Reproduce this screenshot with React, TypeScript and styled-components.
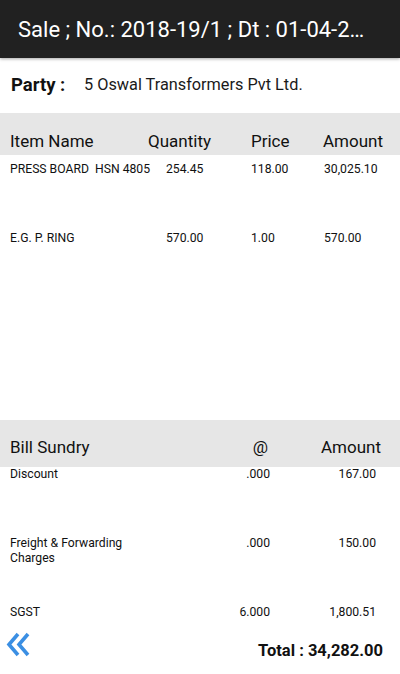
import styled, {createGlobalStyle} from "styled-components";

const GlobalStyle = createGlobalStyle`
  html, body {
    margin: 0;
    padding: 0;
    background: #fff;
    font-family: Roboto, "Noto Sans", Arial, sans-serif;
    color: #111;
  }
`

const Screen = styled.div`
  width: 400px;
  height: 674px;
  display: flex;
  flex-direction: column;
  overflow: hidden;
`

const TitleBar = styled.div`
  height: 58px;
  flex: none;
  background: #212121;
  color: #fff;
  display: flex;
  align-items: center;
  padding: 0 30px 0 18px;
  font-size: 22px;
  box-shadow: 0 1px 3px rgba(0, 0, 0, 0.35);
  position: relative;
  z-index: 1;

  span {
    white-space: nowrap;
    overflow: hidden;
    text-overflow: ellipsis;
  }
`

const PartyRow = styled.div`
  height: 55px;
  flex: none;
  display: flex;
  align-items: center;
  padding: 0 11px;
  box-sizing: border-box;
  padding-bottom: 2px;
`

const PartyLabel = styled.div`
  font-weight: bold;
  font-size: 18.5px;
  width: 73px;
`

const PartyName = styled.div`
  font-size: 16.3px;
  color: #1a1a1a;
`

const HeadBar = styled.div<{ $h: number, $pb: number, $cols: string }>`
  height: ${p => p.$h}px;
  flex: none;
  background: #e6e6e6;
  display: grid;
  grid-template-columns: ${p => p.$cols};
  align-items: end;
  padding-left: 10px;
  padding-bottom: ${p => p.$pb}px;
  box-sizing: border-box;
  font-size: 17px;
  color: #111;
`

const ItemList = styled.div`
  height: 265px;
  flex: none;
`

const Row = styled.div<{ $cols: string, $top?: number }>`
  height: 69px;
  box-sizing: border-box;
  display: grid;
  grid-template-columns: ${p => p.$cols};
  align-items: start;
  padding-left: 10px;
  padding-top: ${p => p.$top || 0}px;
  font-size: 12.2px;
  line-height: 15px;
  color: #111;
`

const Cell = styled.div<{ $pad?: number, $right?: boolean, $nowrap?: boolean }>`
  padding-left: ${p => p.$pad || 0}px;
  text-align: ${p => p.$right ? "right" : "left"};
  white-space: ${p => p.$nowrap ? "pre" : "normal"};
`

const SundryList = styled.div`
  flex: 1;
  overflow: hidden;
`

const Footer = styled.div`
  height: 52px;
  flex: none;
  display: flex;
  align-items: center;
  justify-content: space-between;
  padding: 0 17px 0 5px;
`

const BackButton = styled.button`
  border: none;
  background: none;
  padding: 0;
  margin-top: -8px;
  display: flex;
  cursor: pointer;
`

const Total = styled.div`
  font-weight: bold;
  font-size: 16.5px;
  margin-top: 4px;
`

const itemCols = "138px 103px 72px 1fr"
const sundryCols = "200px 60px 106px"

const items = [
    {name: "PRESS BOARD  HSN 4805", qty: "254.45", price: "118.00", amount: "30,025.10"},
    {name: "E.G. P. RING", qty: "570.00", price: "1.00", amount: "570.00"},
]

const sundries = [
    {name: "Discount", at: ".000", amount: "167.00"},
    {name: "Freight & Forwarding Charges", at: ".000", amount: "150.00"},
    {name: "SGST", at: "6.000", amount: "1,800.51"},
]

const DoubleChevron = () => (
    <svg width="28" height="27" viewBox="0 0 28 27">
        <path d="M13 3 L4 13.5 L13 24" fill="none" stroke="#3b8fe3" strokeWidth="3.6"/>
        <path d="M23 3 L14 13.5 L23 24" fill="none" stroke="#3b8fe3" strokeWidth="3.6"/>
    </svg>
)

export default function App() {
    return (
        <Screen>
            <GlobalStyle/>
            <TitleBar><span>Sale ; No.: 2018-19/1 ; Dt : 01-04-2018</span></TitleBar>
            <PartyRow>
                <PartyLabel>Party :</PartyLabel>
                <PartyName>5 Oswal Transformers Pvt Ltd.</PartyName>
            </PartyRow>
            <HeadBar $h={42} $pb={4} $cols={itemCols}>
                <Cell>Item Name</Cell>
                <Cell>Quantity</Cell>
                <Cell>Price</Cell>
                <Cell>Amount</Cell>
            </HeadBar>
            <ItemList>
                {items.map(it => (
                    <Row key={it.name} $cols={itemCols} $top={7}>
                        <Cell $nowrap>{it.name}</Cell>
                        <Cell $pad={18}>{it.qty}</Cell>
                        <Cell>{it.price}</Cell>
                        <Cell $pad={1}>{it.amount}</Cell>
                    </Row>
                ))}
            </ItemList>
            <HeadBar $h={47} $pb={10} $cols={sundryCols}>
                <Cell>Bill Sundry</Cell>
                <Cell $right style={{marginRight: 2}}>@</Cell>
                <Cell $right style={{marginRight: -5}}>Amount</Cell>
            </HeadBar>
            <SundryList>
                {sundries.map(s => (
                    <Row key={s.name} $cols={sundryCols}>
                        <Cell style={{maxWidth: 130}}>{s.name}</Cell>
                        <Cell $right>{s.at}</Cell>
                        <Cell $right>{s.amount}</Cell>
                    </Row>
                ))}
            </SundryList>
            <Footer>
                <BackButton><DoubleChevron/></BackButton>
                <Total>Total : 34,282.00</Total>
            </Footer>
        </Screen>
    )
}
